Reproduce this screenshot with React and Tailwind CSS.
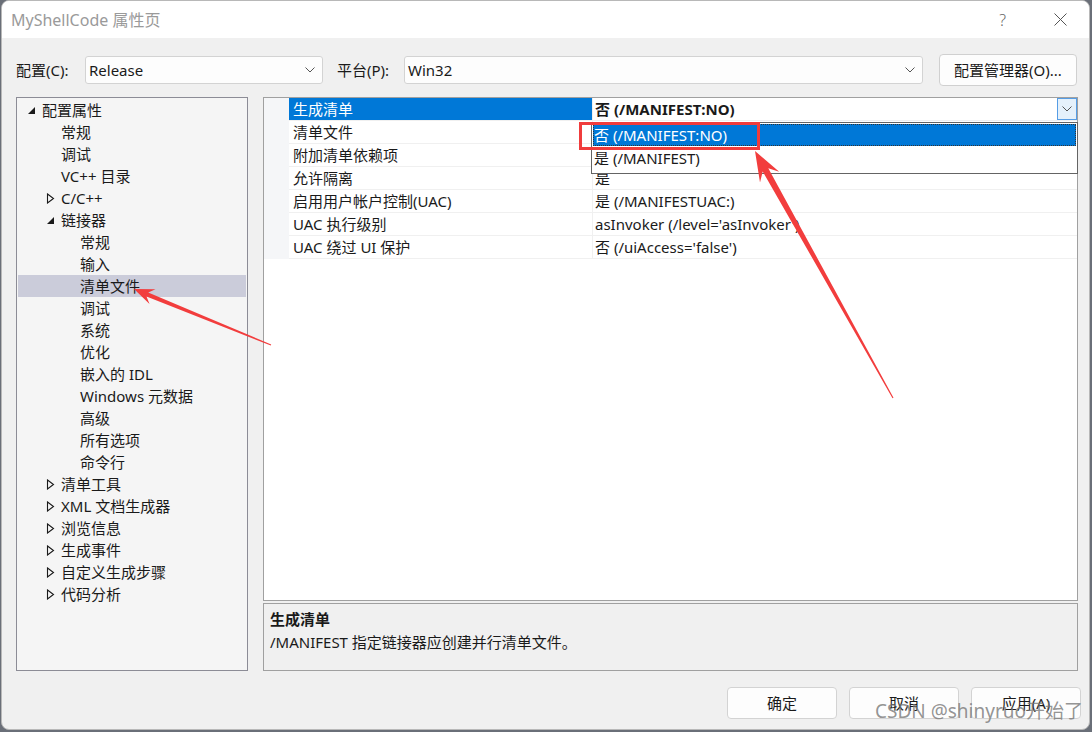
import React from "react";

const FONT = "font-['Noto_Sans','Noto_Sans_CJK_SC',sans-serif]";

const tree = [
  ["配置属性", 0, "open"],
  ["常规", 1, null],
  ["调试", 1, null],
  ["VC++ 目录", 1, null],
  ["C/C++", 1, "closed"],
  ["链接器", 1, "open"],
  ["常规", 2, null],
  ["输入", 2, null],
  ["清单文件", 2, null, true],
  ["调试", 2, null],
  ["系统", 2, null],
  ["优化", 2, null],
  ["嵌入的 IDL", 2, null],
  ["Windows 元数据", 2, null],
  ["高级", 2, null],
  ["所有选项", 2, null],
  ["命令行", 2, null],
  ["清单工具", 1, "closed"],
  ["XML 文档生成器", 1, "closed"],
  ["浏览信息", 1, "closed"],
  ["生成事件", 1, "closed"],
  ["自定义生成步骤", 1, "closed"],
  ["代码分析", 1, "closed"],
];

const indent = ["pl-[9px]", "pl-[28px]", "pl-[47px]"];

const props = [
  ["生成清单", "否 (/MANIFEST:NO)", true],
  ["清单文件", ""],
  ["附加清单依赖项", ""],
  ["允许隔离", "是"],
  ["启用用户帐户控制(UAC)", "是 (/MANIFESTUAC:)"],
  ["UAC 执行级别", "asInvoker (/level='asInvoker')"],
  ["UAC 绕过 UI 保护", "否 (/uiAccess='false')"],
];

function Chevron({ className = "" }) {
  return (
    <svg width="10" height="6" viewBox="0 0 10 6" className={className}>
      <polyline points="0.5,0.5 5,5 9.5,0.5" fill="none" stroke="#555" strokeWidth="1" />
    </svg>
  );
}

function Tri({ type }) {
  if (type === "open")
    return (
      <svg width="9" height="9" viewBox="0 0 9 9">
        <polygon points="8,1 8,8 1,8" fill="#1a1a1a" />
      </svg>
    );
  if (type === "closed")
    return (
      <svg width="9" height="11" viewBox="0 0 9 11">
        <polygon points="1.5,1 7.5,5.5 1.5,10" fill="none" stroke="#1a1a1a" strokeWidth="1.1" />
      </svg>
    );
  return null;
}

function arrowPts(tx, ty, px, py, hl, hw, sw) {
  const dx = px - tx, dy = py - ty;
  const L = Math.hypot(dx, dy);
  const ux = dx / L, uy = dy / L;
  const nx = -uy, ny = ux;
  const wbx = px - ux * hl, wby = py - uy * hl;
  const sbx = px - ux * hl * 0.72, sby = py - uy * hl * 0.72;
  const p = [
    [tx + nx * 0.6, ty + ny * 0.6],
    [sbx + nx * sw, sby + ny * sw],
    [wbx + nx * hw, wby + ny * hw],
    [px, py],
    [wbx - nx * hw, wby - ny * hw],
    [sbx - nx * sw, sby - ny * sw],
    [tx - nx * 0.6, ty - ny * 0.6],
  ];
  return p.map((q) => q[0].toFixed(1) + "," + q[1].toFixed(1)).join(" ");
}

export default function App() {
  return (
    <div className={`relative w-[1092px] h-[732px] overflow-hidden bg-[#6a6f78] ${FONT}`}>
      <div className="ml-[1px] w-[1089px] h-[730px] rounded-[8px] overflow-hidden bg-[#f0f0f0] flex flex-col border border-[#b8b8b8]">
        {/* title bar */}
        <div className="h-[37px] bg-white flex items-center shrink-0">
          <div className="pl-[9px] text-[16px] leading-[20px] text-[#9a9a9a]">MyShellCode 属性页</div>
          <div className="ml-auto flex items-center">
            <div className="text-[16px] leading-[20px] text-[#666] font-light mr-[48px]">?</div>
            <svg width="13" height="13" viewBox="0 0 13 13" className="mr-[22px]">
              <line x1="0.5" y1="0.5" x2="12.5" y2="12.5" stroke="#555" strokeWidth="1" />
              <line x1="12.5" y1="0.5" x2="0.5" y2="12.5" stroke="#555" strokeWidth="1" />
            </svg>
          </div>
        </div>

        {/* config row */}
        <div className="mt-[16px] h-[32px] flex items-center pl-[14px] text-[15px] leading-[20px] text-[#1a1a1a] shrink-0">
          <div className="w-[69px]">配置(C):</div>
          <div className="w-[238px] h-[28px] bg-[#fdfdfd] border border-[#d3d3d3] rounded-[3px] flex items-center pl-[3px] pr-[7px]">
            <span>Release</span>
            <Chevron className="ml-auto" />
          </div>
          <div className="ml-[14px] w-[67px]">平台(P):</div>
          <div className="w-[519px] h-[28px] bg-[#fdfdfd] border border-[#d3d3d3] rounded-[3px] flex items-center pl-[3px] pr-[7px]">
            <span>Win32</span>
            <Chevron className="ml-auto" />
          </div>
          <div className="ml-[16px] w-[138px] h-[32px] bg-[#fdfdfd] border border-[#d0d0d0] rounded-[4px] flex items-center justify-center">
            配置管理器(O)...
          </div>
        </div>

        {/* main */}
        <div className="mt-[11px] h-[574px] flex pl-[14px] gap-[15px] shrink-0">
          {/* tree */}
          <div className="w-[232px] h-full border border-[#8c8c96] bg-[#f5f5f5] p-[1px] text-[15px] text-[#1a1a1a]">
            {tree.map(([label, level, type, sel], i) => (
              <div
                key={i}
                className={`h-[22px] flex items-center ${indent[level]} ${sel ? "bg-[#cbccda]" : ""}`}
              >
                <div className="w-[15px] flex items-center">
                  <Tri type={type} />
                </div>
                <span className="leading-[20px] whitespace-nowrap">{label}</span>
              </div>
            ))}
          </div>

          {/* right column */}
          <div className="w-[815px] h-full flex flex-col gap-[2px]">
            <div className="relative h-[504px] border border-[#a0a0a0] bg-white text-[15px] text-[#1a1a1a]">
              {props.map(([name, val, active], i) => (
                <div key={i} className="h-[23px] flex">
                  <div className="w-[25px] bg-[#f5f6f8]" />
                  <div
                    className={`w-[303px] flex items-center pl-[4px] border-b border-[#f0f0f0] ${
                      active ? "bg-[#0078d7] text-white border-[#0078d7]" : ""
                    }`}
                  >
                    <span className="leading-[20px] whitespace-nowrap">{name}</span>
                  </div>
                  <div className="flex-1 flex items-center pl-[2px] border-l border-b border-[#f0f0f0]">
                    <span className={`leading-[20px] whitespace-nowrap ${active ? "font-bold" : ""}`}>{val}</span>
                    {active && (
                      <div className="ml-auto w-[20px] h-[22px] border border-[#569de5] bg-[#e5f1fb] flex items-center justify-center">
                        <Chevron />
                      </div>
                    )}
                  </div>
                </div>
              ))}

              {/* dropdown list */}
              <div className="absolute left-[327px] top-[24px] w-[487px] h-[52px] bg-white border border-[#646464] p-[1px]">
                <div className="h-[22px] bg-[#0078d7] text-white flex items-center pl-0 border border-dotted border-[#333]">
                  <span className="leading-[20px]">否 (/MANIFEST:NO)</span>
                </div>
                <div className="h-[23px] flex items-center pl-[1px]">
                  <span className="leading-[20px]">是 (/MANIFEST)</span>
                </div>
              </div>
            </div>

            <div className="flex-1 border border-[#a0a0a0] bg-[#f0f0f0] px-[6px] pt-[4px] text-[15px] text-[#1a1a1a]">
              <div className="font-bold leading-[22px]">生成清单</div>
              <div className="leading-[22px] mt-[1px]">/MANIFEST 指定链接器应创建并行清单文件。</div>
            </div>
          </div>
        </div>

        {/* bottom buttons */}
        <div className="mt-[16px] flex justify-end gap-[12px] pr-[8px] text-[15px] text-[#1a1a1a] shrink-0">
          {["确定", "取消", "应用(A)"].map((t) => (
            <div
              key={t}
              className="w-[110px] h-[32px] bg-[#fdfdfd] border border-[#d3d3d3] rounded-[4px] flex items-center justify-center"
            >
              {t}
            </div>
          ))}
        </div>
      </div>

      {/* annotations */}
      <div className="absolute left-[579px] top-[122px] w-[181px] h-[28px] border-[3px] border-[#f03c3c]" />
      <svg className="absolute left-0 top-0 pointer-events-none" width="1092" height="732">
        <polygon points={arrowPts(271, 345, 134, 289, 20, 8, 2.2)} fill="#f23d3d" />
        <polygon points={arrowPts(893, 398, 755, 151, 30, 11, 3.2)} fill="#f23d3d" />
      </svg>
      <div className="absolute left-[875px] top-[699px] text-[19px] leading-[24px] text-[rgba(120,120,120,0.8)] whitespace-nowrap">
        CSDN @shinyruo开始了
      </div>
    </div>
  );
}
